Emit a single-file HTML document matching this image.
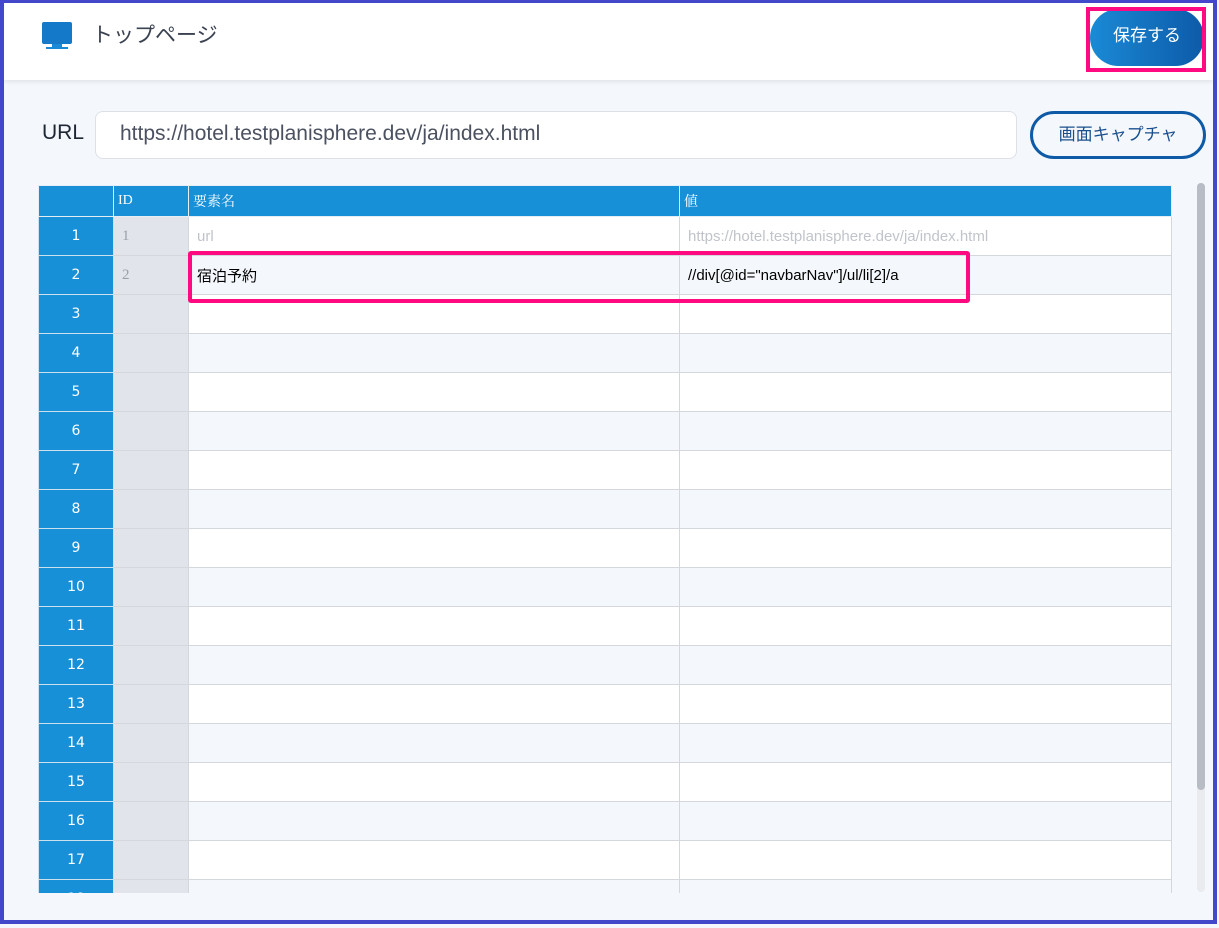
<!DOCTYPE html>
<html><head><meta charset="utf-8"><style>
*{box-sizing:border-box;margin:0;padding:0}
body{width:1219px;height:928px;background:#f4f7fb;position:relative;overflow:hidden;font-family:"Liberation Sans","Noto Sans CJK JP",sans-serif}
.frame{position:absolute;left:0;top:0;width:1217px;height:924px;border:4px solid #4347c9;border-top-width:3px}
.hdr{position:absolute;left:4px;top:3px;width:1209px;height:77px;background:#fff;box-shadow:0 2px 4px rgba(0,0,0,.08)}
.title{position:absolute;font-size:21px;color:#3a4150}
.save{position:absolute;left:1090px;top:9px;width:114px;height:57px;border-radius:29px;background:linear-gradient(90deg,#1a8ad6,#0d5aa8);color:#fff;font-size:17px;text-align:center;line-height:53px}
.pink1{position:absolute;left:1086px;top:7px;width:120px;height:65px;border:4px solid #ff0a80}
.url{position:absolute;left:42px;top:121px;font-size:21px;color:#1f2633}
.inp{position:absolute;left:95px;top:111px;width:922px;height:48px;background:#fff;border:1px solid #dde1e7;border-radius:8px;font-size:21px;color:#4b5160;padding-left:24px;line-height:44px}
.cap{position:absolute;left:1030px;top:111px;width:176px;height:48px;border:3px solid #0e5aa6;border-radius:24px;color:#1a4f8e;font-size:17px;text-align:center;line-height:41px}
td,th{border:1px solid #d4d7dc;height:39px;font-size:14px;font-weight:normal;text-align:left;padding-left:8px;overflow:hidden;white-space:nowrap}
th{background:#1890d8;color:#fff;height:31px;border-color:#e6eef5;font-family:"Liberation Serif","Noto Serif CJK SC",serif;padding-left:4px}
td.n{background:#1890d8;color:#fff;text-align:center;padding:0;border-color:#cde0ee;font-family:"DejaVu Sans",sans-serif;font-size:14px}
td.i{background:#e1e4ea;color:#9aa0a8;font-family:"Liberation Serif",serif;font-size:15px}
tr:nth-child(even) td.c{background:#fff}
tr:nth-child(odd) td.c{background:#f4f7fb}
.wrap{position:absolute;left:38px;top:185px;width:1134px;height:708px;overflow:hidden}
table{border-collapse:collapse;table-layout:fixed;width:1133px}
.g{color:#c0c4ca}
.c{font-size:15px}
.sb{position:absolute;left:1197px;top:183px;width:8px;height:709px;border-radius:4px;background:#e9ebef}
.sb div{height:607px;border-radius:4px;background:#b8bcc5}
.pink2{position:absolute;left:188px;top:251px;width:782px;height:52px;border:4px solid #ff0a80;border-radius:3px}
</style></head><body>
<div class="hdr">
<svg style="position:absolute;left:38px;top:19px" width="32" height="28" viewBox="0 0 32 28"><rect x="0" y="0" width="30" height="22" rx="2" fill="#1479c9"/><rect x="10" y="22" width="10" height="3" fill="#1a8ad6"/><rect x="4" y="25" width="22" height="2" fill="#1a8ad6"/></svg>
<div class="title" style="left:88px;top:16px">トップページ</div>
</div>
<div class="save">保存する</div>
<div class="pink1"></div>
<div class="url">URL</div>
<div class="inp">https://hotel.testplanisphere.dev/ja/index.html</div>
<div class="cap">画面キャプチャ</div>
<div class="wrap"><table>
<colgroup><col style="width:75px"><col style="width:75px"><col style="width:491px"><col style="width:492px"></colgroup>
<tr><th></th><th>ID</th><th>要素名</th><th>値</th></tr>
<tr><td class="n">1</td><td class="i">1</td><td class="c g">url</td><td class="c g">https://hotel.testplanisphere.dev/ja/index.html</td></tr>
<tr><td class="n">2</td><td class="i">2</td><td class="c">宿泊予約</td><td class="c">//div[@id="navbarNav"]/ul/li[2]/a</td></tr>
<tr><td class="n">3</td><td class="i"></td><td class="c"></td><td class="c"></td></tr>
<tr><td class="n">4</td><td class="i"></td><td class="c"></td><td class="c"></td></tr>
<tr><td class="n">5</td><td class="i"></td><td class="c"></td><td class="c"></td></tr>
<tr><td class="n">6</td><td class="i"></td><td class="c"></td><td class="c"></td></tr>
<tr><td class="n">7</td><td class="i"></td><td class="c"></td><td class="c"></td></tr>
<tr><td class="n">8</td><td class="i"></td><td class="c"></td><td class="c"></td></tr>
<tr><td class="n">9</td><td class="i"></td><td class="c"></td><td class="c"></td></tr>
<tr><td class="n">10</td><td class="i"></td><td class="c"></td><td class="c"></td></tr>
<tr><td class="n">11</td><td class="i"></td><td class="c"></td><td class="c"></td></tr>
<tr><td class="n">12</td><td class="i"></td><td class="c"></td><td class="c"></td></tr>
<tr><td class="n">13</td><td class="i"></td><td class="c"></td><td class="c"></td></tr>
<tr><td class="n">14</td><td class="i"></td><td class="c"></td><td class="c"></td></tr>
<tr><td class="n">15</td><td class="i"></td><td class="c"></td><td class="c"></td></tr>
<tr><td class="n">16</td><td class="i"></td><td class="c"></td><td class="c"></td></tr>
<tr><td class="n">17</td><td class="i"></td><td class="c"></td><td class="c"></td></tr>
<tr><td class="n">18</td><td class="i"></td><td class="c"></td><td class="c"></td></tr>
</table></div>
<div class="sb"><div></div></div>
<div class="pink2"></div>
<div class="frame"></div>
</body></html>
